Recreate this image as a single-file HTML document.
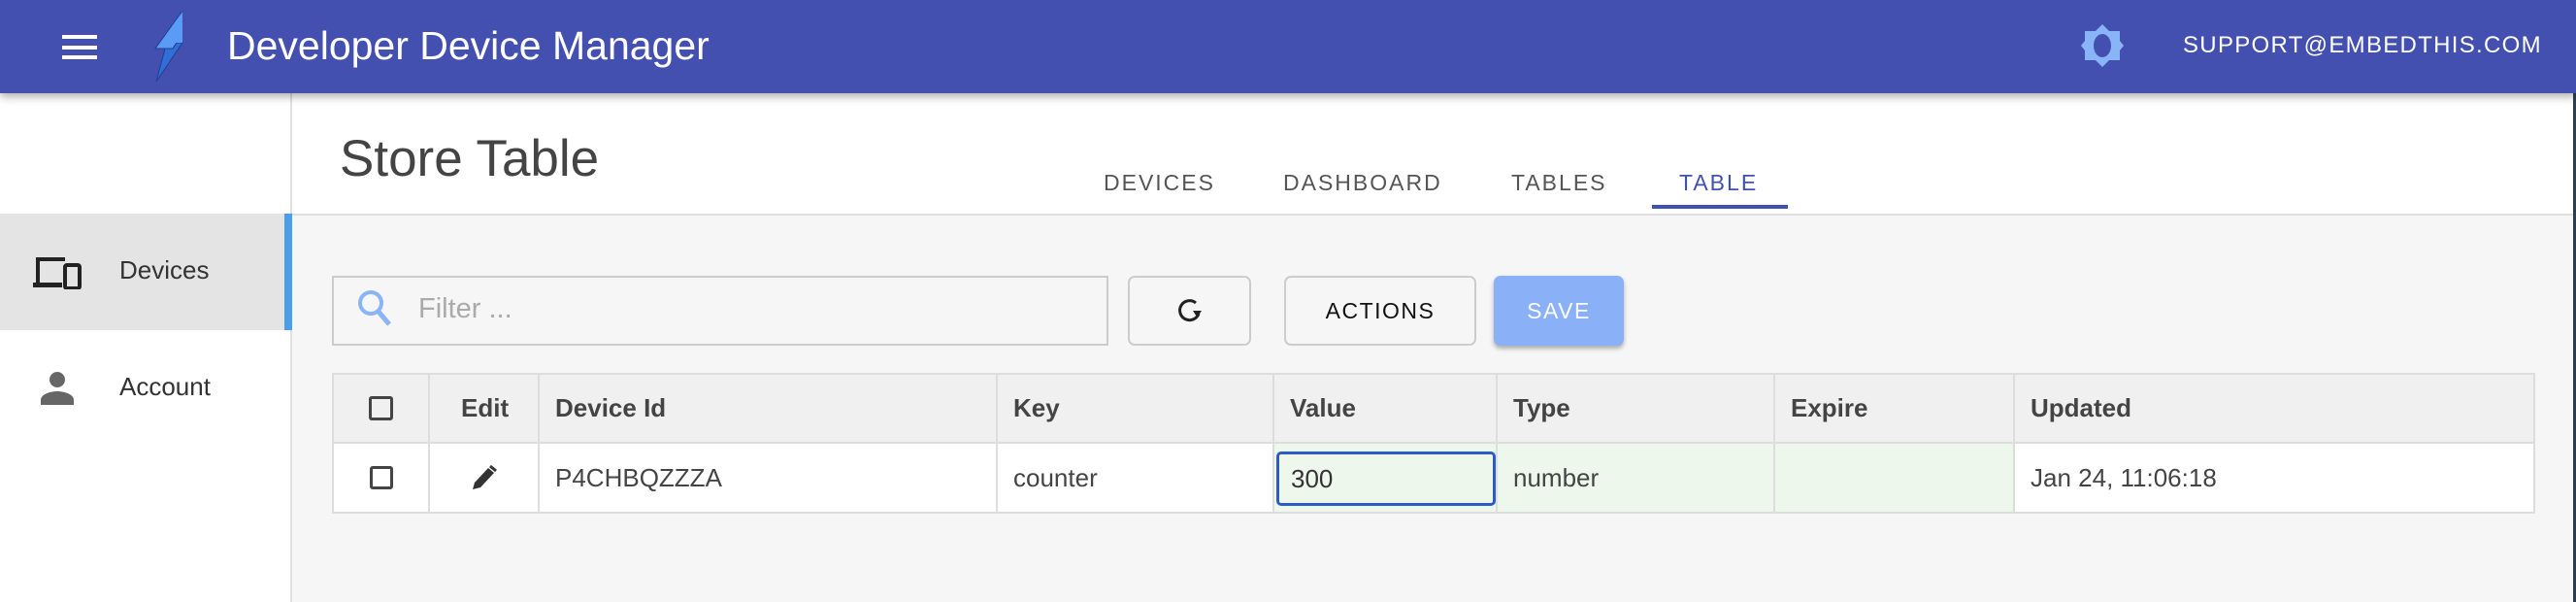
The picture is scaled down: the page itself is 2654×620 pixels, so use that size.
<!DOCTYPE html>
<html><head><meta charset="utf-8"><style>
*{margin:0;padding:0;box-sizing:border-box}
body{width:2654px;height:620px;overflow:hidden;background:#f6f6f6;font-family:"Liberation Sans",sans-serif;position:relative}
.a{position:absolute}
.hdr{left:0;top:0;width:2654px;height:96px;background:#4450b0;box-shadow:0 4px 8px rgba(0,0,0,.3);z-index:5}
.side{left:0;top:96px;width:301px;height:524px;background:#fff;border-right:2px solid #e0e0e0}
.top{left:301px;top:96px;width:2353px;height:126px;background:#fff;border-bottom:2px solid #ddd}
.tab{top:174px;font-size:23px;letter-spacing:2px;color:#555;line-height:28px}
.btn{top:284px;height:72px;border:2px solid #ccc;border-radius:7px;background:#f6f6f6;font-size:23px;letter-spacing:1.5px;display:flex;align-items:center;justify-content:center}
.cell{position:absolute;border-right:2px solid #ddd;font-size:26px;color:#444;display:flex;align-items:center;padding-left:16px}
.cb{width:25px;height:25px;border:3px solid #444;border-radius:3px}
</style></head><body>
<div class="a hdr">
 <div class="a" style="left:64px;top:36px;width:36px;height:4px;background:#fff"></div>
 <div class="a" style="left:64px;top:47px;width:36px;height:4px;background:#fff"></div>
 <div class="a" style="left:64px;top:57px;width:36px;height:4px;background:#fff"></div>
 <svg class="a" style="left:150px;top:8px" width="50" height="82" viewBox="150 8 50 82">
  <polygon points="188,11 160,50 178,50 182,44" fill="#5a9cf5" stroke="#1f3f8f" stroke-width="1"/>
  <polygon points="182,44 188,44 161,84 170,50 178,50" fill="#2f6fd6" stroke="#1f3f8f" stroke-width="1"/>
  <polygon points="188,11 178,44 188,44" fill="#5a9cf5"/>
 </svg>
 <div class="a" style="left:234px;top:22px;font-size:41px;color:#fff;line-height:50px">Developer Device Manager</div>
 <svg class="a" style="left:2144px;top:25px" width="44" height="44" viewBox="0 0 44 44">
  <polygon points="22,0 29,7 40,7 40,17 44,22 40,27 40,37 29,37 22,44 15,37 4,37 4,27 0,22 4,17 4,7 15,7" fill="#8ab4f8"/>
  <ellipse cx="22" cy="22" rx="9" ry="12" fill="#4450b0"/>
 </svg>
 <div class="a" style="left:2249px;top:32px;font-size:24px;color:#fff;letter-spacing:1.3px;line-height:30px">SUPPORT@EMBEDTHIS.COM</div>
</div>
<div class="a side">
 <div class="a" style="left:0;top:124px;width:299px;height:120px;background:#e4e4e4"></div>
 <div class="a" style="left:293px;top:124px;width:8px;height:120px;background:#4a9fe8"></div>
 <svg class="a" style="left:34px;top:168px" width="50" height="34" viewBox="0 0 50 34">
  <path d="M5 28V3h28" fill="none" stroke="#222" stroke-width="4"/>
  <rect x="0" y="27" width="30" height="5" fill="#222"/>
  <rect x="33" y="9" width="15" height="24" rx="2" fill="none" stroke="#222" stroke-width="4"/>
 </svg>
 <div class="a" style="left:123px;top:166px;font-size:26px;color:#333;line-height:32px">Devices</div>
 <svg class="a" style="left:42px;top:287px" width="34" height="34" viewBox="0 0 34 34">
  <circle cx="17" cy="8" r="8" fill="#666"/>
  <path d="M0 34v-5c0-6 10-9 17-9s17 3 17 9v5z" fill="#666"/>
 </svg>
 <div class="a" style="left:123px;top:286px;font-size:26px;color:#333;line-height:32px">Account</div>
</div>
<div class="a top"></div>
<div class="a" style="left:350px;top:132px;font-size:53px;color:#444;line-height:64px">Store Table</div>
<div class="a tab" style="left:1137px">DEVICES</div>
<div class="a tab" style="left:1322px">DASHBOARD</div>
<div class="a tab" style="left:1557px">TABLES</div>
<div class="a tab" style="left:1730px;color:#3f51b5">TABLE</div>
<div class="a" style="left:1702px;top:211px;width:140px;height:4px;background:#3f51b5"></div>

<div class="a" style="left:342px;top:284px;width:800px;height:72px;border:2px solid #ccc;background:#f6f6f6"></div>
<svg class="a" style="left:368px;top:298px" width="38" height="40" viewBox="0 0 38 40">
 <circle cx="14" cy="14" r="11" fill="none" stroke="#8ab4f8" stroke-width="4"/>
 <path d="M22 23l11 13" stroke="#8ab4f8" stroke-width="5"/>
</svg>
<div class="a" style="left:431px;top:300px;font-size:29px;color:#aaa;line-height:36px">Filter ...</div>
<div class="a btn" style="left:1162px;width:127px">
 <svg width="28" height="28" viewBox="0 0 28 28"><path d="M20 6A10 10 0 1 0 23 17" fill="none" stroke="#222" stroke-width="3"/><polygon points="17,14 26,14 21.5,21" fill="#222"/></svg>
</div>
<div class="a btn" style="left:1323px;width:198px;color:#111">ACTIONS</div>
<div class="a btn" style="left:1539px;width:134px;background:#8ab0f8;border-color:#8ab0f8;color:#fff;box-shadow:0 3px 5px rgba(0,0,0,.3)">SAVE</div>

<div class="a" style="left:342px;top:384px;width:2270px;height:145px;border:2px solid #ddd;background:#fff"></div>
<div class="a" style="left:344px;top:386px;width:2266px;height:71px;background:#f0f0f0;border-bottom:2px solid #ddd"></div>
<div class="a" style="left:1313px;top:457px;width:763px;height:70px;background:#eef7ec"></div>
<div style="font-weight:bold">
<div class="cell" style="left:344px;top:386px;width:99px;height:69px;padding:0;justify-content:center"><div class="cb"></div></div>
<div class="cell" style="left:443px;top:386px;width:113px;height:69px;padding-left:32px">Edit</div>
<div class="cell" style="left:556px;top:386px;width:472px;height:69px">Device Id</div>
<div class="cell" style="left:1028px;top:386px;width:285px;height:69px">Key</div>
<div class="cell" style="left:1313px;top:386px;width:230px;height:69px">Value</div>
<div class="cell" style="left:1543px;top:386px;width:286px;height:69px">Type</div>
<div class="cell" style="left:1829px;top:386px;width:247px;height:69px">Expire</div>
<div class="cell" style="left:2076px;top:386px;width:534px;height:69px;border:none">Updated</div>
</div>
<div class="cell" style="left:344px;top:457px;width:99px;height:70px;padding:0;justify-content:center"><div class="cb" style="width:24px;height:24px"></div></div>
<div class="cell" style="left:443px;top:457px;width:113px;height:70px;padding:0;justify-content:center">
 <svg width="28" height="26" viewBox="0 0 28 26"><path d="M2 25l2-7L18 3l6 5L10 23z" fill="#333"/><path d="M20 1l6 5" stroke="#333" stroke-width="3"/></svg>
</div>
<div class="cell" style="left:556px;top:457px;width:472px;height:70px">P4CHBQZZZA</div>
<div class="cell" style="left:1028px;top:457px;width:285px;height:70px">counter</div>
<div class="cell" style="left:1313px;top:457px;width:230px;height:70px;padding:0"></div>
<div class="a" style="left:1315px;top:465px;width:226px;height:56px;border:3px solid #2a5cc4;border-radius:5px;font-size:26px;color:#333;padding-left:12px;display:flex;align-items:center">300</div>
<div class="cell" style="left:1543px;top:457px;width:286px;height:70px">number</div>
<div class="cell" style="left:1829px;top:457px;width:247px;height:70px"></div>
<div class="cell" style="left:2076px;top:457px;width:534px;height:70px;border:none">Jan 24, 11:06:18</div>
<div class="a" style="left:2651px;top:96px;width:3px;height:524px;background:#2c3e50"></div>
</body></html>
